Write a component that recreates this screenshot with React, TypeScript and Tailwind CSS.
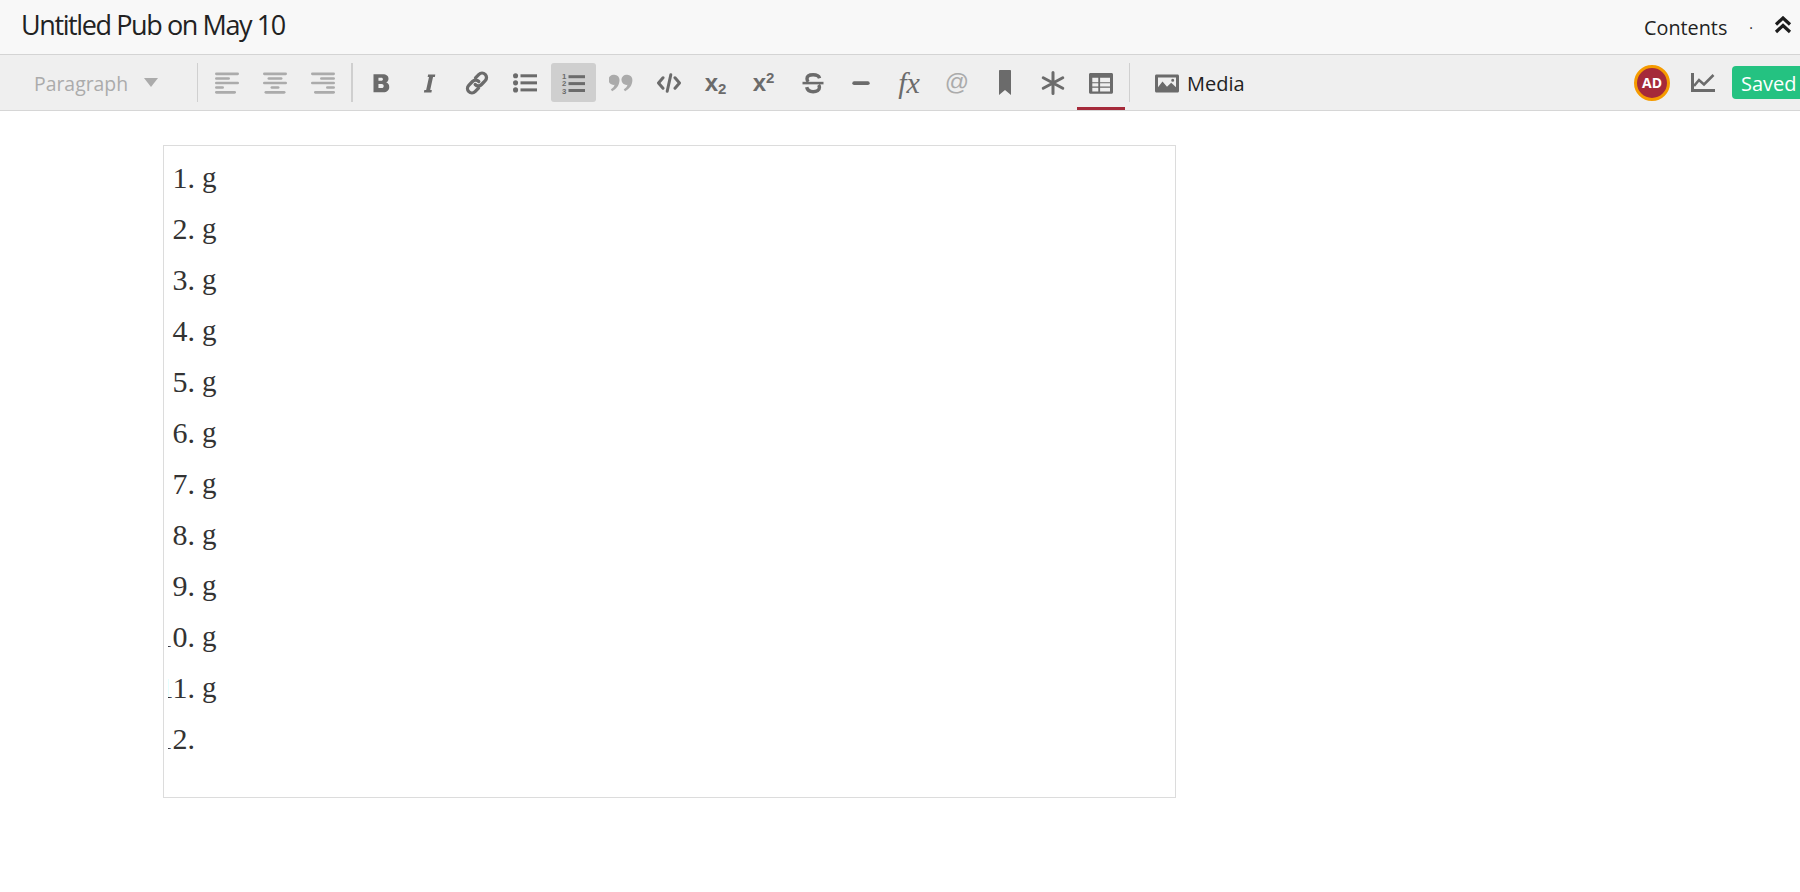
import React from "react";

const sans = "font-['Open_Sans','Noto_Sans',sans-serif]";

function Btn({ children, active, color = "#6b6b6b" }: { children: React.ReactNode; active?: boolean; color?: string }) {
  return (
    <div
      className={`relative flex h-[39px] w-[45px] shrink-0 items-center justify-center rounded-[3px] ${active ? "bg-[#cfcfcf]" : ""}`}
      style={{ color }}
    >
      {children}
    </div>
  );
}

function Ico({ children, size = 24, vb = "0 0 16 16" }: { children: React.ReactNode; size?: number; vb?: string }) {
  return (
    <svg width={size} height={size} viewBox={vb} fill="currentColor">
      {children}
    </svg>
  );
}

const Bar = ({ x, y, w }: { x: number; y: number; w: number }) => <rect x={x} y={y - 0.9} width={w} height="1.8" rx="0.9" />;
const rows = [1.9, 5, 8, 11, 14.2];
const comma = "M3.6 2.5a3.4 3.4 0 0 1 3.4 3.5c0 3.400-2 6-4.900 7.500l-.9-1.200c1.500-1 2.300-2 2.500-3.100a3.400 3.400 0 1 1-.100-6.700z";

export default function App() {
  return (
    <div className="flex h-[892px] w-[1800px] flex-col overflow-hidden bg-white">
      <header className={`flex h-[54px] shrink-0 items-center bg-[#f8f8f8] pl-[21px] pr-2 ${sans}`}>
        <div className="mb-[4px] text-[27px] leading-[48px] tracking-[-1.4px] text-[#222]">Untitled Pub on May 10</div>
        <div className="ml-auto flex items-center">
          <span className="mt-[2px] text-[19.8px] text-[#222]">Contents</span>
          <span className="ml-[22px] mr-[21px] text-[14px] text-[#222]">·</span>
          <svg width="18" height="18" viewBox="0 0 18 18" fill="none" stroke="#1c1c1c" strokeWidth="3.2" className="mb-1">
            <path d="M2 8.500 9 2l7 6.500M2 16l7-6.500 7 6.500" />
          </svg>
        </div>
      </header>
      <div className="h-[2px] shrink-0 border-t border-[#d4d4d4] bg-[#efefef]" />
      <div className="flex h-[55px] shrink-0 items-center border-b border-[#d6d6d6] bg-[#efefef] pb-[1px]">
        <div className={`flex w-[197px] shrink-0 items-center pl-[34px] text-[#ababab] ${sans}`}>
          <span className="mt-[2px] text-[19.4px]">Paragraph</span>
          <svg width="14" height="9" viewBox="0 0 14 9" className="ml-[16px]">
            <path d="M0 0h14L7 9z" fill="#ababab" />
          </svg>
        </div>
        <div className="h-[39px] w-px shrink-0 bg-[#d0d0d0]" />
        <div className="ml-[6px] flex gap-[3px]">
          <Btn color="#ababab">
            <Ico>{rows.map((y, i) => <Bar key={i} x={0} y={y} w={[16, 10, 16, 6, 14][i]} />)}</Ico>
          </Btn>
          <Btn color="#ababab">
            <Ico>{rows.map((y, i) => <Bar key={i} x={[0, 3, 0, 5, 1][i]} y={y} w={[16, 10, 16, 6, 14][i]} />)}</Ico>
          </Btn>
          <Btn color="#ababab">
            <Ico>{rows.map((y, i) => <Bar key={i} x={[0, 6, 0, 10, 2][i]} y={y} w={[16, 10, 16, 6, 14][i]} />)}</Ico>
          </Btn>
        </div>
        <div className="ml-[6px] h-[39px] w-[2px] shrink-0 bg-[#cfcfcf]" />
        <div className="ml-[5.5px] flex gap-[3px]">
          <Btn>
            <Ico><path fillRule="evenodd" d="M3 2.200h6.200c2.400 0 3.800 1.100 3.800 3 0 1.200-.6 2.100-1.600 2.500 1.300.4 2.100 1.400 2.100 2.900 0 2.200-1.500 3.500-4 3.500H3zm3.300 2.300v2h1.900c.7 0 1.100-.4 1.100-1s-.4-1-1.100-1zm0 4.200v2.700h2.200c.8 0 1.300-.5 1.300-1.350S9.300 8.700 8.500 8.700z" /></Ico>
          </Btn>
          <Btn>
            <Ico><path d="M7.400 2.300H12.200l-.3 1.700h-1.200L8.800 12.600h1.100l-.3 1.700H4.600l.3-1.700h1.200L8 4H7.100z" /></Ico>
          </Btn>
          <Btn>
            <Ico><g fill="none" stroke="currentColor" strokeWidth="2.200" strokeLinecap="round"><path d="M7 4.600 9.300 2.300a2.900 2.900 0 0 1 4.200 4.100L11 9a2.900 2.900 0 0 1-4.200 0" /><path d="M9 11.400 6.700 13.700a2.900 2.900 0 0 1-4.200-4.100L5 7a2.900 2.900 0 0 1 4.200 0" /></g></Ico>
          </Btn>
          <Btn>
            <Ico><circle cx="1.700" cy="3.200" r="1.700" /><circle cx="1.700" cy="7.900" r="1.700" /><circle cx="1.700" cy="12.600" r="1.700" /><rect x="5" y="2.200" width="11" height="2" /><rect x="5" y="6.900" width="11" height="2" /><rect x="5" y="11.600" width="11" height="2" /></Ico>
          </Btn>
          <Btn active>
            <Ico>
              <rect x="5" y="2.800" width="11" height="2" />
              <rect x="5" y="7.400" width="11" height="2" />
              <rect x="5" y="12" width="11" height="2" />
              <text x="0.600" y="5" fontSize="5.200" fontWeight="700" fontFamily="Liberation Sans">1</text>
              <text x="0.600" y="10" fontSize="5.200" fontWeight="700" fontFamily="Liberation Sans">2</text>
              <text x="0.600" y="15" fontSize="5.200" fontWeight="700" fontFamily="Liberation Sans">3</text>
            </Ico>
          </Btn>
          <Btn color="#ababab">
            <Ico><path d={comma} /><g transform="translate(8.600 0)"><path d={comma} /></g></Ico>
          </Btn>
          <Btn>
            <Ico><g fill="none" stroke="currentColor" strokeWidth="2" strokeLinecap="round" strokeLinejoin="round"><path d="M4 4.500 1 8l3 3.500M12 4.500 15 8l-3 3.500" /><path d="M9.200 2.500 6.800 13.500" /></g></Ico>
          </Btn>
          <Btn>
            <span className="mr-[3px] font-['Liberation_Sans',sans-serif] text-[24px] font-bold leading-none">x<sub className="text-[15px] font-bold">2</sub></span>
          </Btn>
          <Btn>
            <span className="mr-[3px] font-['Liberation_Sans',sans-serif] text-[24px] font-bold leading-none">x<sup className="text-[15px] font-bold">2</sup></span>
          </Btn>
          <Btn>
            <Ico><path d="M1 7.200h14v1.700H1z" /><path fill="none" stroke="currentColor" strokeWidth="2.300" d="M12.400 4.800C11.900 3.200 10.300 2.500 8.100 2.500 5.600 2.500 4 3.500 4 5.200c0 .8.300 1.500.9 2M3.800 10.800c.4 2 2 3 4.300 3 2.500 0 4.200-1.100 4.200-2.900 0-.7-.2-1.200-.6-1.700" /></Ico>
          </Btn>
          <Btn>
            <Ico><rect x="2.200" y="6.900" width="11.600" height="2.400" rx="1.200" /></Ico>
          </Btn>
          <Btn>
            <span className="font-['Liberation_Serif',serif] text-[30px] italic leading-none">fx</span>
          </Btn>
          <Btn color="#ababab">
            <span className="mb-[2px] font-['Liberation_Sans',sans-serif] text-[24px] leading-none">@</span>
          </Btn>
          <Btn>
            <svg width="12" height="25" viewBox="0 0 12 25" fill="currentColor" className="mb-[1px]">
              <path d="M.8 0h10.400c.5 0 .8.300.8.800V25L6 20l-6 5V.8C0 .3.300 0 .8 0z" />
            </svg>
          </Btn>
          <Btn>
            <Ico><path d="M8 1v14M1.500 4.500l13 7M14.500 4.500l-13 7" fill="none" stroke="currentColor" strokeWidth="2" strokeLinecap="round" /></Ico>
          </Btn>
          <Btn>
            <Ico><path fillRule="evenodd" d="M1 1.400h14c.6 0 1 .4 1 1v11.800c0 .6-.4 1-1 1H1c-.6 0-1-.4-1-1V2.400c0-.6.4-1 1-1zM2.200 4.500v3h4v-3zm5.200 0v3H14v-3zM2.200 8.100v2.300h4V8.100zm5.200 0v2.300H14V8.100zM2.200 11.200v2.500h4v-2.500zm5.200 0v2.500H14v-2.500z" /></Ico>
            <div className="absolute bottom-[-8px] left-[-2px] h-[3px] w-[48px] bg-[#a52a3a]" />
          </Btn>
        </div>
        <div className="ml-[5.5px] h-[39px] w-px shrink-0 bg-[#d0d0d0]" />
        <div className="ml-[25px] flex items-center text-[#6b6b6b]">
          <Ico><path fillRule="evenodd" d="M1 2.300h14c.6 0 1 .4 1 1v10c0 .6-.4 1-1 1H1c-.6 0-1-.4-1-1v-10c0-.6.4-1 1-1zm1 2v6.500l3-3.800 3 3.500 2.800-2.700 3.200 3V4.300zM11.800 5.200a1 1 0 1 1 0 2 1 1 0 0 1 0-2z" /></Ico>
          <span className={`ml-[8px] mt-[2px] text-[20px] text-[#222] ${sans}`}>Media</span>
        </div>
        <div className="ml-auto flex shrink-0 items-center">
          <div className={`flex h-[36px] w-[36px] items-center justify-center rounded-full border-[3px] border-[#f59b00] bg-[#a52a3a] text-[14px] font-bold text-white ${sans}`}>
            AD
          </div>
          <div className="ml-[21px] text-[#6b6b6b]">
            <svg width="24" height="20" viewBox="0 0 24 20" fill="none" stroke="currentColor" strokeWidth="3">
              <path d="M1.500 0v17.500H24" />
              <path d="M3 13l5-6 5 4.500L22.500 2" strokeWidth="2.600" />
            </svg>
          </div>
          <div className={`ml-[17px] flex h-[33px] w-[68px] items-center rounded-l-[4px] bg-[#24c281] pl-[9px] text-[20px] text-white ${sans}`}>
            <span className="mt-[2px]">Saved</span>
          </div>
        </div>
      </div>
      <main className="pl-[163px] pt-[34px]">
        <ol className="h-[653px] w-[1013px] overflow-hidden border border-[#dcdcdc] pt-[6px] font-['Liberation_Serif',serif] leading-[51px] text-[#333]">
          {Array.from({ length: 12 }, (_, i) => (
            <li key={i} className="flex h-[51px] pl-[4px]">
              <span className="flex w-[27px] shrink-0 justify-end overflow-hidden whitespace-nowrap text-[30px]">{i + 1}.</span>
              {i < 11 && <span className="ml-[7px] text-[29px]">g</span>}
            </li>
          ))}
        </ol>
      </main>
    </div>
  );
}
